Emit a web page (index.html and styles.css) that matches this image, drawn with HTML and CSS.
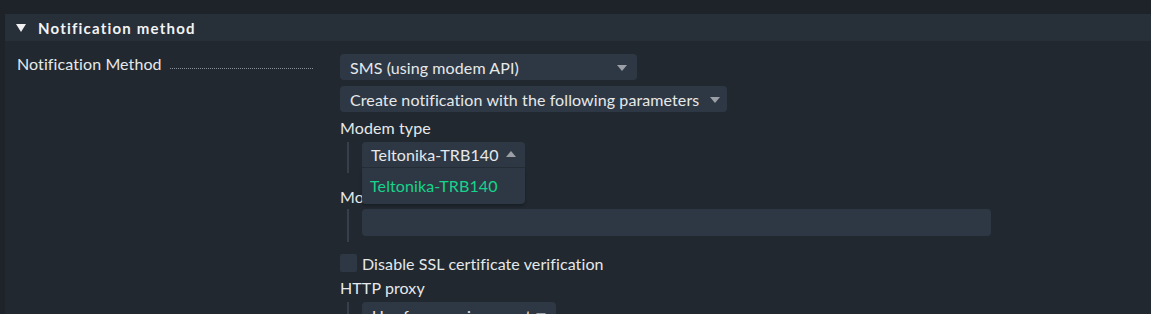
FILE: index.html
```html
<!DOCTYPE html>
<html>
<head>
<meta charset="utf-8">
<link rel="stylesheet" href="styles.css">
</head>
<body>
<div class="page">
  <div class="panel">
    <div class="panel-head">
      <span class="tri-down"></span>
      <span class="panel-title">Notification method</span>
    </div>
    <div class="panel-body">
      <div class="label-col">
        <span class="label-text">Notification Method</span>
        <span class="dots"></span>
      </div>
      <div class="value-col">
        <div class="select w1"><span>SMS (using modem API)</span><span class="arrow"></span></div>
        <div class="select w2"><span>Create notification with the following parameters</span><span class="arrow"></span></div>
        <div class="field-label">Modem type</div>
        <div class="nest nest-select">
          <div class="dropdown">
            <div class="select open w3"><span>Teltonika-TRB140</span><span class="arrow up"></span></div>
            <div class="menu">
              <div class="menu-item">Teltonika-TRB140</div>
            </div>
          </div>
        </div>
        <div class="field-label">Modem URL</div>
        <div class="nest nest-input">
          <div class="input"></div>
        </div>
        <div class="check-row">
          <span class="checkbox"></span>
          <span>Disable SSL certificate verification</span>
        </div>
        <div class="field-label">HTTP proxy</div>
        <div class="nest">
          <div class="select w4"><span>Use from environment</span><span class="arrow"></span></div>
        </div>
      </div>
    </div>
  </div>
</div>
</body>
</html>
```

FILE: styles.css
```css
* { box-sizing: border-box; }
html, body {
  margin: 0;
  padding: 0;
  background: #1e2229;
  height: 100%;
  overflow: hidden;
}
body {
  font-family: Lato, "Open Sans", sans-serif;
  font-size: 16px;
  letter-spacing: 0.1px;
  color: #e6e8ea;
}
.page {
  padding-top: 14px;
}
.panel {
  margin-left: 5px;
  background: #212830;
  min-height: 300px;
}
.panel-head {
  height: 27px;
  background: #272f39;
  display: flex;
  align-items: center;
  padding-left: 11px;
}
.tri-down {
  width: 0;
  height: 0;
  border-left: 5px solid transparent;
  border-right: 5px solid transparent;
  border-top: 8px solid #f0f0f0;
  margin-right: 12px;
  margin-top: 1px;
}
.panel-title {
  font-size: 15px;
  font-weight: 700;
  letter-spacing: 1.2px;
  color: #f2f3f4;
}
.panel-body {
  display: grid;
  grid-template-columns: 323px 1fr;
  padding-left: 12px;
  padding-top: 13px;
}
.label-col {
  display: flex;
  align-items: flex-start;
  padding-top: 0;
  padding-right: 27px;
}
.label-text {
  white-space: nowrap;
  line-height: 19px;
}
.dots {
  flex: 1;
  margin-left: 8px;
  margin-top: 14px;
  border-bottom: 1px dotted #8a9098;
}
.value-col {
  display: flex;
  flex-direction: column;
  align-items: flex-start;
}
.select {
  height: 26px;
  background: #2e3844;
  border-radius: 4px;
  display: flex;
  align-items: center;
  justify-content: space-between;
  padding: 0 10px;
  margin-bottom: 6px;
  white-space: nowrap;
  overflow: hidden;
}
.w1 { width: 297px; }
.w2 { width: 387px; padding-right: 7px; margin-bottom: 4px; }
.w3 { width: 163px; margin-bottom: 0; padding-left: 9px; padding-right: 9px; }
.w4 { width: 194px; }
.arrow {
  width: 0;
  height: 0;
  flex: none;
  border-left: 5px solid transparent;
  border-right: 5px solid transparent;
  border-top: 6px solid #9aa0a6;
  margin-left: 4px;
  margin-top: 2px;
}
.arrow.up {
  border-top: 0;
  border-bottom: 6px solid #9aa0a6;
  margin-top: -2px;
}
.field-label {
  line-height: 20px;
  height: 20px;
  margin-top: 2px;
}
.nest {
  border-left: 2px solid #363f4a;
  margin-left: 7px;
  padding-left: 13px;
  margin-top: 4px;
  padding-bottom: 6px;
}
.nest-select {
  height: 31px;
  margin-bottom: 12px;
}
.dropdown {
  position: relative;
}
.select.open {
  border-radius: 4px 4px 0 0;
  border-bottom: 1px solid #252d36;
}
.menu {
  position: absolute;
  left: 0;
  top: 26px;
  width: 163px;
  height: 36px;
  background: #2e3844;
  border-radius: 0 0 4px 4px;
  box-shadow: 0 2px 3px rgba(0,0,0,0.25);
  z-index: 5;
}
.menu-item {
  color: #16d48b;
  padding: 8px 0 0 8px;
  line-height: 19px;
  white-space: nowrap;
}
.nest-input {
  margin-top: 2px;
}
.input {
  width: 629px;
  height: 27px;
  background: #2e3844;
  border-radius: 4px;
}
.check-row {
  display: flex;
  align-items: center;
  margin-top: 12px;
  height: 18px;
  margin-bottom: 4px;
}
.checkbox {
  width: 17px;
  height: 18px;
  background: #2e3844;
  border-radius: 2px;
  margin-right: 5px;
}
```
